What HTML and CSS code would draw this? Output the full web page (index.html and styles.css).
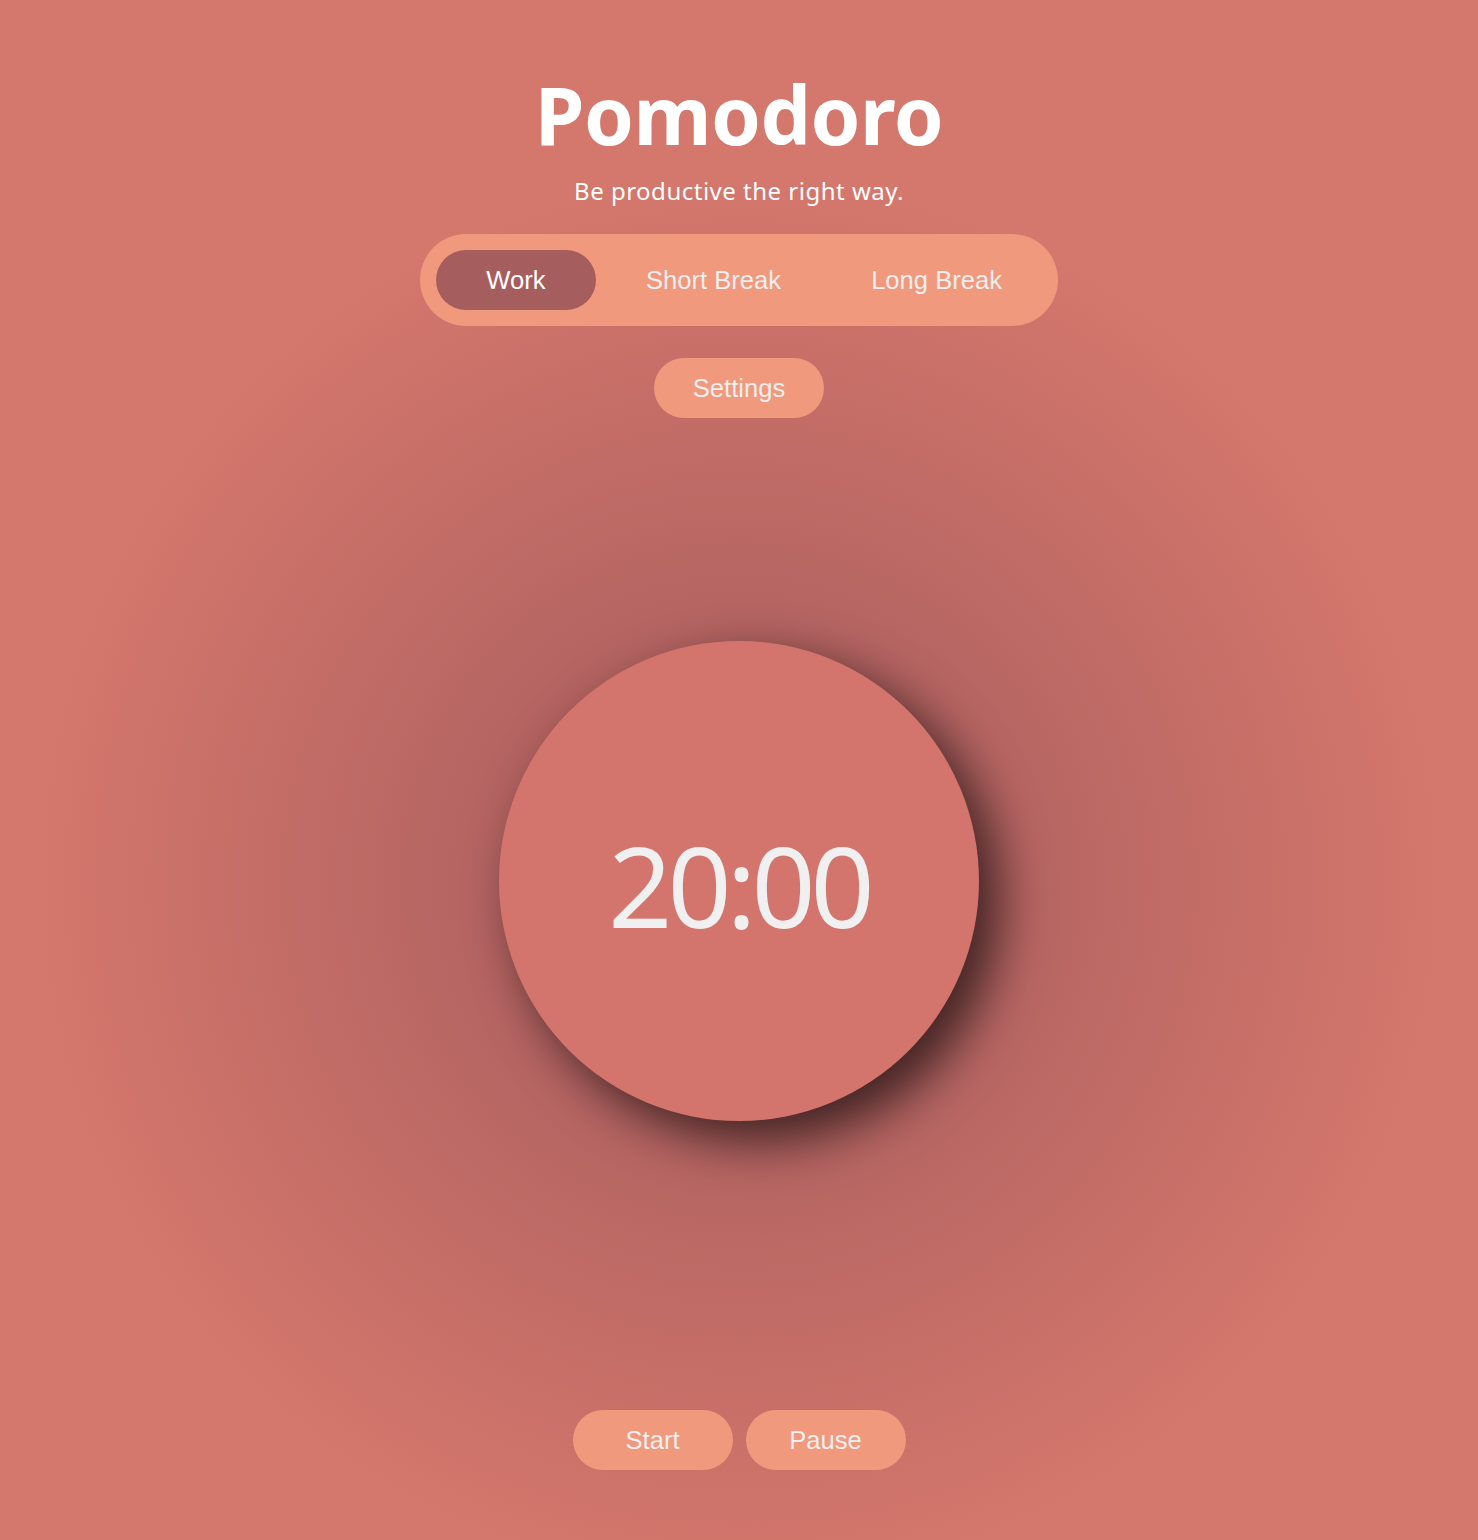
FILE: index.html
```html
<!DOCTYPE html>
<html lang="en">
<head>
<meta charset="utf-8">
<title>Pomodoro</title>
<link rel="stylesheet" href="styles.css">
</head>
<body>
<main class="app">
  <h1 class="title">Pomodoro</h1>
  <p class="subtitle">Be productive the right way.</p>
  <nav class="modes">
    <button class="btn mode active">Work</button>
    <button class="btn mode">Short Break</button>
    <button class="btn mode">Long Break</button>
  </nav>
  <button class="btn pill settings">Settings</button>
  <div class="timer">
    <span class="time">20:00</span>
  </div>
  <div class="controls">
    <button class="btn pill">Start</button>
    <button class="btn pill">Pause</button>
  </div>
</main>
</body>
</html>
```

FILE: styles.css
```css
html, body {
  margin: 0;
  padding: 0;
}

body {
  min-height: 1540px;
  background: radial-gradient(circle 700px at 50% 881px, #a2595c 0%, #d4776c 100%);
  background-color: #d4776c;
  font-family: "Noto Sans", "Open Sans", sans-serif;
  color: #ffffff;
}

.app {
  display: flex;
  flex-direction: column;
  align-items: center;
}

.title {
  margin: 74px 0 0;
  font-size: 80px;
  line-height: 1;
  font-weight: 700;
  letter-spacing: -0.5px;
  color: #ffffff;
}

.subtitle {
  margin: 22px 0 0;
  font-size: 24px;
  line-height: 29px;
  font-weight: 400;
  letter-spacing: 0.5px;
  color: #ffffff;
}

.btn {
  height: 60px;
  min-width: 160px;
  padding: 0 40px;
  border: none;
  border-radius: 30px;
  background: #f0997d;
  color: #f0eeee;
  font-family: "Liberation Sans", Arial, sans-serif;
  font-size: 25.6px;
  line-height: 60px;
  cursor: pointer;
}

.modes {
  margin-top: 29px;
  display: flex;
  gap: 10px;
  padding: 16px;
  border-radius: 46px;
  background: #f0997d;
}

.mode {
  background: transparent;
}

.mode.active {
  background: #a65d5e;
  color: #ffffff;
}

.settings {
  margin-top: 32px;
  padding: 0 39px;
}

.timer {
  margin-top: 223px;
  width: 480px;
  height: 480px;
  border-radius: 50%;
  background: #d3756c;
  box-shadow: 20px 20px 50px rgba(0, 0, 0, 0.65);
  display: flex;
  align-items: center;
  justify-content: center;
}

.time {
  padding-top: 7px;
  font-size: 112px;
  font-weight: 400;
  letter-spacing: -5px;
  color: #f0f0f0;
}

.controls {
  margin-top: 289px;
  display: flex;
  gap: 13px;
}
```
